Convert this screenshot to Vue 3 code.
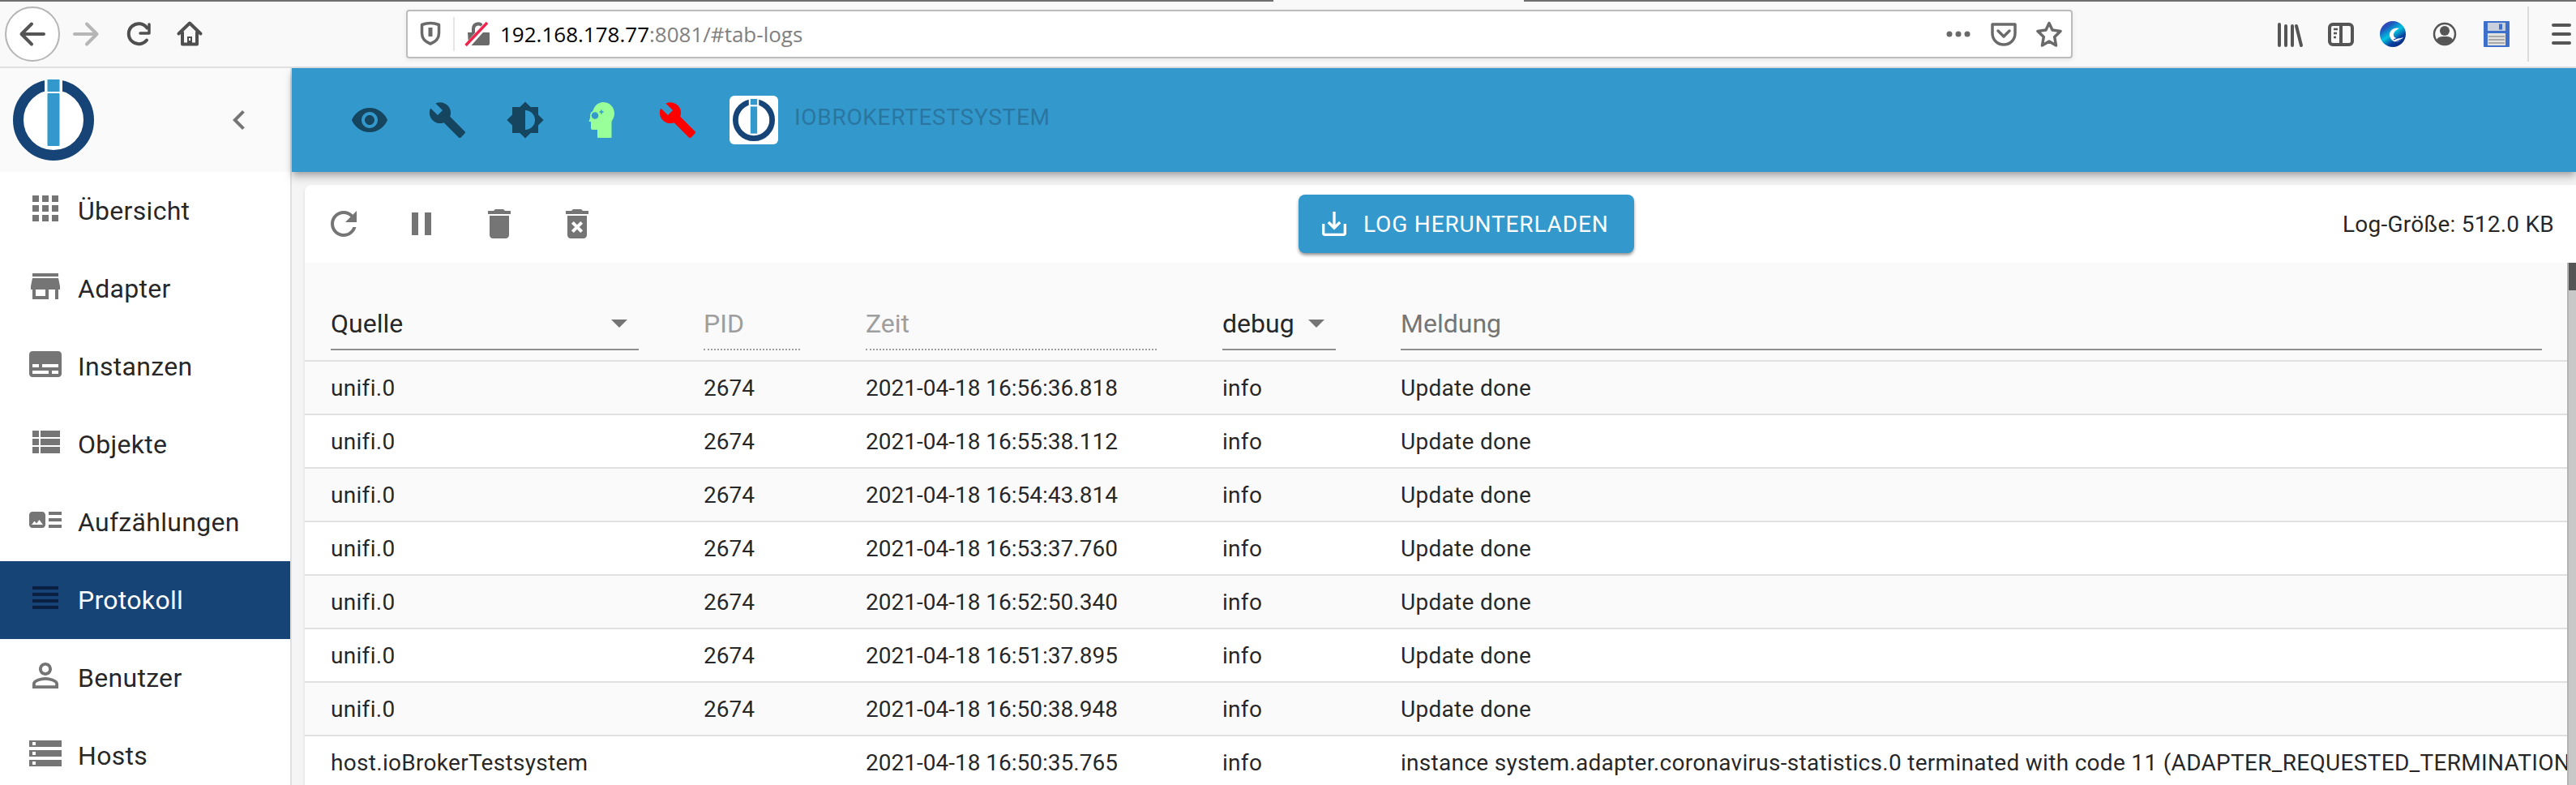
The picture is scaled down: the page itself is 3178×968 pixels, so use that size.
<script setup>
const navItems = [
  { label: 'Übersicht', d: 'M4 8h4V4H4v4zm6 12h4v-4h-4v4zm-6 0h4v-4H4v4zm0-6h4v-4H4v4zm6 0h4v-4h-4v4zm6-10v4h4V4h-4zm-6 4h4V4h-4v4zm6 6h4v-4h-4v4zm0 6h4v-4h-4v4z' },
  { label: 'Adapter', d: 'M20 4H4v2h16V4zm1 10v-2l-1-5H4l-1 5v2h1v6h10v-6h4v6h2v-6h1zm-9 4H6v-4h6v4z' },
  { label: 'Instanzen', d: 'M20 4H4c-1.1 0-2 .9-2 2v12c0 1.1.9 2 2 2h16c1.1 0 2-.9 2-2V6c0-1.1-.9-2-2-2zM4 12h4v2H4v-2zm10 6H4v-2h10v2zm6 0h-4v-2h4v2zm0-4H10v-2h10v2z' },
  { label: 'Objekte', d: 'M4 14h4v-4H4v4zm0 5h4v-4H4v4zM4 9h4V5H4v4zm5 5h12v-4H9v4zm0 5h12v-4H9v4zM9 5v4h12V5H9z' },
  { label: 'Aufzählungen', d: 'M22 13h-8v-2h8v2zm0-6h-8v2h8V7zm-8 10h8v-2h-8v2zm-2-8v6c0 1.1-.9 2-2 2H4c-1.1 0-2-.9-2-2V9c0-1.1.9-2 2-2h6c1.1 0 2 .9 2 2zm-1.5 6l-2.25-3-1.75 2.26-1.25-1.51L3.5 15h7z' },
  { label: 'Protokoll', active: true, d: 'M4 15h16v-2H4v2zm0 4h16v-2H4v2zm0-8h16V9H4v2zm0-6v2h16V5H4z' },
  { label: 'Benutzer', d: 'M12 5.9c1.16 0 2.1.94 2.1 2.1s-.94 2.1-2.1 2.1S9.9 9.16 9.9 8s.94-2.1 2.1-2.1m0 9c2.97 0 6.1 1.46 6.1 2.1v1.1H5.9V17c0-.64 3.13-2.1 6.1-2.1M12 4C9.79 4 8 5.79 8 8s1.79 4 4 4 4-1.79 4-4-1.79-4-4-4zm0 9c-2.67 0-8 1.34-8 4v3h16v-3c0-2.66-5.33-4-8-4z' },
  { label: 'Hosts', d: 'M2 20h20v-4H2v4zm2-3h2v2H4v-2zM2 4v4h20V4H2zm4 3H4V5h2v2zm-4 7h20v-4H2v4zm2-3h2v2H4v-2z' },
]
const wrench = 'M22.7 19l-9.1-9.1c.9-2.3.4-5-1.5-6.9-2-2-5-2.4-7.4-1.3L9 6 6 9 1.6 4.7C.4 7.1.9 10.1 2.9 12.1c1.9 1.9 4.6 2.4 6.9 1.5l9.1 9.1c.4.4 1 .4 1.4 0l2.3-2.3c.5-.4.5-1.1.1-1.4z'
const tools = [
  'M17.65 6.35C16.2 4.9 14.21 4 12 4c-4.42 0-7.99 3.58-7.99 8s3.57 8 7.99 8c3.73 0 6.84-2.55 7.73-6h-2.08c-.82 2.33-3.04 4-5.65 4-3.31 0-6-2.69-6-6s2.69-6 6-6c1.66 0 3.14.69 4.22 1.78L13 11h7V4l-2.35 2.35z',
  'M6 19h4V5H6v14zm8-14v14h4V5h-4z',
  'M6 19c0 1.1.9 2 2 2h8c1.1 0 2-.9 2-2V7H6v12zM19 4h-3.5l-1-1h-5l-1 1H5v2h14V4z',
  'M6 19c0 1.1.9 2 2 2h8c1.1 0 2-.9 2-2V7H6v12zm2.46-7.12l1.41-1.41L12 12.59l2.12-2.12 1.41 1.41L13.41 14l2.12 2.12-1.41 1.41L12 15.41l-2.12 2.12-1.41-1.41L10.59 14l-2.13-2.12zM15.5 4l-1-1h-5l-1 1H5v2h14V4z',
]
const times = ['16:56:36.818', '16:55:38.112', '16:54:43.814', '16:53:37.760', '16:52:50.340', '16:51:37.895', '16:50:38.948']
const rows = [
  ...times.map((t) => ({ src: 'unifi.0', pid: '2674', time: '2021-04-18 ' + t, level: 'info', msg: 'Update done' })),
  { src: 'host.ioBrokerTestsystem', pid: '', time: '2021-04-18 16:50:35.765', level: 'info', msg: 'instance system.adapter.coronavirus-statistics.0 terminated with code 11 (ADAPTER_REQUESTED_TERMINATION)' },
]
</script>

<template>
  <div class="page">
    <div class="browser">
      <div class="tabline"><span class="tl-a"></span><span class="tl-b"></span></div>
      <div class="nav-row">
        <div class="back">
          <svg class="ff" viewBox="0 0 32 32" fill="none" stroke="#555" stroke-width="4" stroke-linecap="round" stroke-linejoin="round"><path d="M30 16H3M15 3.5 2.5 16 15 28.5" /></svg>
        </div>
        <div class="nav-icons">
          <svg class="ff" viewBox="0 0 32 32" fill="none" stroke="#b6b6b6" stroke-width="4" stroke-linecap="round" stroke-linejoin="round"><path d="M2 16h27M17 3.5 29.5 16 17 28.5" /></svg>
          <svg class="ff" viewBox="0 0 32 32" fill="none" stroke="#4f4f4f" stroke-width="4" stroke-linecap="round" stroke-linejoin="round"><path d="M27 23.5A12.5 12.5 0 1 1 27.5 8.500" /><path d="M30 4V15H19" stroke-width="3.500" /></svg>
          <svg class="ff" viewBox="0 0 32 32" fill="none" stroke="#4f4f4f" stroke-width="4" stroke-linecap="round" stroke-linejoin="round"><path d="M2.500 15.500 16 2.500l13.500 13" /><path d="M7 14v14.500h18V14" /><path d="M13 28v-9h6v9h-6z" fill="#4f4f4f" stroke="none" /><rect x="15" y="21" width="2" height="3" fill="#fff" stroke="none" /></svg>
        </div>
        <div class="urlbar">
          <svg class="ff" viewBox="0 0 32 32" fill="none" stroke="#6a6a6a" stroke-width="3.500" stroke-linejoin="round"><path d="M4.500 4.500C11 2 19 2 25.500 4.500V15c0 6-4 10.500-10.500 13C8.500 25.500 4.500 21 4.500 15z" /><path d="M15 8v11" stroke-width="5" /></svg>
          <span class="url-sep"></span>
          <svg class="ff" viewBox="0 0 32 32"><path d="M11 15V9a6 6 0 0 1 10.500-3.500" fill="none" stroke="#6a6a6a" stroke-width="4" /><path d="M4 14h26a1 1 0 0 1 1 1v13a2 2 0 0 1-2 2H5z" fill="#6a6a6a" /><path d="M3 31 29 2" stroke="#fff" stroke-width="7" /><path d="M1.500 30 28 2" stroke="#f0254e" stroke-width="3.500" /></svg>
          <span class="url"><b>192.168.178.77</b>:8081/#tab-logs</span>
          <span class="url-right">
            <svg class="ff" viewBox="0 0 32 32" fill="#6a6a6a"><circle cx="5" cy="16" r="3.500" /><circle cx="16" cy="16" r="3.500" /><circle cx="27" cy="16" r="3.500" /></svg>
            <svg class="ff" viewBox="0 0 32 32" fill="none" stroke="#6a6a6a" stroke-width="3.500" stroke-linecap="round" stroke-linejoin="round"><path d="M2 4h28v11c0 8-6 14-14 14S2 23 2 15z" /><path d="M9 12l7 7 7-7" /></svg>
            <svg class="ff" viewBox="0 0 32 32" fill="none" stroke="#6a6a6a" stroke-width="3.500" stroke-linejoin="round"><path d="M16 2.500 20 11l10 1.500-7.300 7L24.500 30 16 25l-8.500 5 1.800-10.500L2 12.500 12 11z" /></svg>
          </span>
        </div>
        <div class="toolbar-right">
          <svg class="ff" viewBox="0 0 32 32" fill="none" stroke="#555" stroke-width="4" stroke-linecap="round"><path d="M4 4v26M12 6v24M20 6v24M25 6l6 24" /></svg>
          <svg class="ff" viewBox="0 0 32 32" fill="none" stroke="#555" stroke-width="4" stroke-linejoin="round"><rect x="2" y="4" width="28" height="25" rx="4" /><path d="M16 4v25" /><path d="M7 10h5M7 15h4M7 20h3" stroke-width="2.500" /></svg>
          <svg class="ff wave" viewBox="0 0 32 32">
            <defs>
              <linearGradient id="waveG" x1="0" y1="0" x2="0.700" y2="1">
                <stop offset="0" stop-color="#5a1fa6" />
                <stop offset="0.300" stop-color="#1c5ec0" />
                <stop offset="0.550" stop-color="#00c4e0" />
                <stop offset="0.800" stop-color="#0a3f9e" />
                <stop offset="1" stop-color="#0a2a80" />
              </linearGradient>
            </defs>
            <circle cx="16" cy="16" r="16" fill="url(#waveG)" />
            <path d="M24 9c-6-2-12 2-12 8 0 5 5 9 9 9 3-1 6-3 8-6-5 2-11 2-12-2-1-4 3-7 7-9z" fill="#fff" />
            <path d="M17 23l12-5M19 26l9-4" stroke="#0a3f9e" stroke-width="1.200" />
          </svg>
          <svg class="ff" viewBox="0 0 32 32" fill="#555"><circle cx="16" cy="16" r="13" fill="none" stroke="#555" stroke-width="2.500" /><circle cx="16" cy="12" r="6" /><path d="M6 23c2-4 6-4 10-4s8 0 10 4c-2 3-6 5-10 5s-8-2-10-5z" /></svg>
          <svg class="ff" viewBox="0 0 32 32"><rect width="32" height="32" rx="1" fill="#3e6fca" /><rect x="5" y="2" width="22" height="10" fill="#c9cfdc" /><rect x="19" y="3.500" width="4" height="7" fill="#3e6fca" /><rect x="5" y="15" width="22" height="15" fill="#e2e2e2" /><path d="M6 19h20M6 23h20M6 27h20" stroke="#a8a8a8" stroke-width="2" /></svg>
          <span class="tb-sep"></span>
          <svg class="ff burger" viewBox="0 0 24 32" fill="none" stroke="#555" stroke-width="4" stroke-linecap="round"><path d="M2 5h20M2 16h20M2 27h20" /></svg>
        </div>
      </div>
    </div>

    <div class="app">
      <aside class="sidebar">
        <div class="side-head">
          <svg class="logo-lg" viewBox="0 0 100 100">
            <circle cx="50" cy="50" r="43.500" fill="#fff" stroke="#164477" stroke-width="13" />
            <rect x="39" y="-1" width="22" height="18" fill="#fff" />
            <rect x="42.500" y="0" width="15" height="15" fill="#3399cc" />
            <rect x="42.500" y="17" width="15" height="65" rx="1" fill="#3399cc" />
          </svg>
          <svg class="chev" viewBox="0 0 24 24" fill="#757575"><path d="M15.410 7.410 14 6l-6 6 6 6 1.410-1.410L10.830 12z" /></svg>
        </div>
        <div v-for="item in navItems" :key="item.label" class="nav-item" :class="{ active: item.active }">
          <svg class="nav-ic" viewBox="0 0 24 24"><path :d="item.d" /></svg>
          <span>{{ item.label }}</span>
        </div>
      </aside>

      <main class="main">
        <header class="topbar">
          <svg class="tb-ic dark" viewBox="0 0 24 24"><path d="M12 4.500C7 4.500 2.730 7.610 1 12c1.730 4.390 6 7.500 11 7.500s9.270-3.110 11-7.500c-1.730-4.390-6-7.500-11-7.500zM12 17c-2.760 0-5-2.240-5-5s2.240-5 5-5 5 2.240 5 5-2.240 5-5 5zm0-8c-1.660 0-3 1.340-3 3s1.340 3 3 3 3-1.340 3-3-1.340-3-3-3z" /></svg>
          <svg class="tb-ic dark" viewBox="0 0 24 24"><path :d="wrench" /></svg>
          <svg class="tb-ic dark" viewBox="0 0 24 24"><path d="M20 15.310 23.310 12 20 8.690V4h-4.690L12 .69 8.690 4H4v4.690L.69 12 4 15.310V20h4.690L12 23.310 15.310 20H20v-4.690zM12 18V6c3.310 0 6 2.690 6 6s-2.690 6-6 6z" /></svg>
          <svg class="tb-ic" viewBox="0 0 48 48">
            <path d="M13 9C16 4 20 2 24 2c8 0 14 6 14 14 0 4-2 7-3.500 10v19a1 1 0 0 1-1 1H18a1 1 0 0 1-1-1v-9h-6a2 2 0 0 1-2-2v-8H6.500L9 18z" fill="#99ff99" />
            <circle cx="14" cy="18.500" r="6" fill="#99ff99" />
            <circle cx="14" cy="18.500" r="4.300" fill="#3399cc" />
            <path d="M22 11.500v5M19.500 14h5" stroke="#3399cc" stroke-width="1.500" />
          </svg>
          <svg class="tb-ic red" viewBox="0 0 24 24"><path :d="wrench" /></svg>
          <span class="logo-box">
            <svg viewBox="0 0 100 100">
              <circle cx="50" cy="50" r="43.500" fill="#fff" stroke="#164477" stroke-width="13" />
              <rect x="38" y="-1" width="24" height="18" fill="#fff" />
              <rect x="42" y="0" width="16" height="14" fill="#3399cc" />
              <rect x="42" y="18" width="16" height="64" fill="#3399cc" />
            </svg>
          </span>
          <span class="sys-name">ioBrokerTestsystem</span>
        </header>

        <section class="content">
          <div class="card">
            <div class="card-bar">
              <div class="tools">
                <span v-for="(d, i) in tools" :key="i" class="tool"><svg viewBox="0 0 24 24"><path :d="d" /></svg></span>
              </div>
              <button class="dl">
                <svg viewBox="0 0 24 24"><path d="M19 12v7H5v-7H3v7c0 1.100.9 2 2 2h14c1.100 0 2-.9 2-2v-7h-2zm-6 .670 2.590-2.580L17 11.500l-5 5-5-5 1.410-1.410L11 12.670V3h2z" /></svg>
                <span>Log herunterladen</span>
              </button>
              <span class="size">Log-Größe: 512.0 KB</span>
            </div>
            <div class="body">
              <div class="table">
                <div class="thead">
                  <div class="f sel f-src"><span>Quelle</span><i class="caret"></i></div>
                  <div class="f dis f-pid"><span>PID</span></div>
                  <div class="f dis f-time"><span>Zeit</span></div>
                  <div class="f sel f-lvl"><span>debug</span><i class="caret"></i></div>
                  <div class="f ph f-msg"><span>Meldung</span></div>
                </div>
                <div v-for="(r, i) in rows" :key="i" class="row" :class="{ odd: i % 2 === 0 }">
                  <span class="txt">{{ r.src }}</span>
                  <span>{{ r.pid }}</span>
                  <span>{{ r.time }}</span>
                  <span class="txt">{{ r.level }}</span>
                  <span class="msg txt">{{ r.msg }}</span>
                </div>
              </div>
              <div class="scrollbar"><div class="thumb"></div></div>
            </div>
          </div>
        </section>
      </main>
    </div>
  </div>
</template>

<style>
html, body {
  margin: 0;
  height: 100%;
  overflow: hidden;
  background: #fff;
}
</style>

<style scoped>
.page {
  width: 3178px;
  height: 968px;
  display: flex;
  flex-direction: column;
  overflow: hidden;
  font-family: Roboto, "Liberation Sans", sans-serif;
  color: rgba(0, 0, 0, 0.87);
}

/* browser chrome */
.browser {
  flex: none;
  height: 84px;
  box-sizing: border-box;
  background: #f9f9fa;
  border-bottom: 2px solid #e0e0e0;
  display: flex;
  flex-direction: column;
}
.tabline {
  flex: none;
  height: 2px;
  display: flex;
  justify-content: space-between;
}
.tl-a { width: 1571px; background: #6f6f6f; }
.tl-b { width: 1298px; background: #6f6f6f; }
.nav-row {
  flex: 1;
  display: flex;
  align-items: center;
  padding-left: 6px;
}
.ff {
  flex: none;
  width: 32px;
  height: 32px;
  overflow: visible;
}
.back {
  flex: none;
  width: 68px;
  height: 68px;
  box-sizing: border-box;
  border: 2px solid #b5b5b6;
  border-radius: 50%;
  background: #fff;
  display: flex;
  align-items: center;
  justify-content: center;
}
.nav-icons {
  flex: none;
  margin-left: 16px;
  display: flex;
  gap: 32px;
}
.urlbar {
  flex: none;
  margin-left: 251px;
  width: 2056px;
  height: 60px;
  box-sizing: border-box;
  border: 2px solid #bcbcbc;
  border-radius: 4px;
  background: #fff;
  box-shadow: 0 2px 6px rgba(0, 0, 0, 0.08);
  display: flex;
  align-items: center;
  padding-left: 13px;
}
.url-sep {
  flex: none;
  width: 2px;
  height: 42px;
  margin: 0 12px 0 11px;
  background: #e6e6e6;
}
.url {
  margin-left: 12px;
  font-family: "Open Sans", sans-serif;
  font-size: 26px;
  color: #808080;
  white-space: nowrap;
}
.url b {
  font-weight: 400;
  color: #000;
}
.url-right {
  margin-left: auto;
  padding-right: 11px;
  display: flex;
  gap: 24px;
}
.toolbar-right {
  flex: none;
  margin-left: 251px;
  display: flex;
  align-items: center;
  gap: 32px;
}
.tb-sep {
  flex: none;
  width: 2px;
  height: 68px;
  background: #dcdcdc;
  margin: 0 -4px 0 -10px;
}
.burger {
  width: 24px;
}

/* app */
.app {
  flex: 1;
  min-height: 0;
  display: flex;
}
.sidebar {
  flex: none;
  width: 360px;
  box-sizing: border-box;
  border-right: 2px solid #e0e0e0;
  background: #fff;
  overflow: hidden;
}
.side-head {
  height: 128px;
  background: #fafafa;
  display: flex;
  align-items: center;
  padding-left: 16px;
}
.logo-lg {
  flex: none;
  width: 100px;
  height: 100px;
}
.chev {
  flex: none;
  width: 48px;
  height: 48px;
  margin-left: 155px;
}
.nav-item {
  height: 96px;
  display: flex;
  align-items: center;
  padding-left: 32px;
  font-size: 32px;
  letter-spacing: 0.300px;
}
.nav-ic {
  flex: none;
  width: 48px;
  height: 48px;
  margin: 0 16px 6px 0;
  fill: #757575;
}
.nav-item.active {
  background: #164477;
  color: #fff;
}
.nav-item.active .nav-ic {
  fill: #0b1f42;
}

.main {
  flex: 1;
  min-width: 0;
  display: flex;
  flex-direction: column;
  background: #f5f5f5;
}
.topbar {
  flex: none;
  position: relative;
  z-index: 2;
  height: 128px;
  background: #3399cc;
  box-shadow: 0 4px 8px -2px rgba(0, 0, 0, 0.3), 0 8px 10px 1px rgba(0, 0, 0, 0.12);
  display: flex;
  align-items: center;
  padding-left: 72px;
}
.tb-ic {
  flex: none;
  width: 48px;
  height: 48px;
  margin-right: 48px;
}
.tb-ic.dark { fill: #164560; }
.tb-ic.red {
  fill: #ff0000;
  margin-left: -4px;
  margin-right: 40px;
}
.logo-box {
  flex: none;
  width: 60px;
  height: 60px;
  box-sizing: border-box;
  padding: 4px;
  border-radius: 6px;
  background: #fff;
  display: flex;
}
.logo-box svg {
  width: 52px;
  height: 52px;
}
.sys-name {
  margin: -8px 0 0 20px;
  font-size: 28px;
  letter-spacing: 0.700px;
  text-transform: uppercase;
  color: #2a76a1;
}

.content {
  flex: 1;
  min-height: 0;
  padding: 16px 0 0 16px;
}
.card {
  height: 100%;
  display: flex;
  flex-direction: column;
  background: #fff;
  border-radius: 8px 0 0 0;
  box-shadow: 0 2px 4px rgba(0, 0, 0, 0.12);
  overflow: hidden;
}
.card-bar {
  flex: none;
  height: 96px;
  display: flex;
  align-items: center;
}
.tools {
  display: flex;
}
.tool {
  width: 96px;
  height: 96px;
  display: flex;
  align-items: center;
  justify-content: center;
}
.tool svg {
  width: 48px;
  height: 48px;
  fill: #757575;
}
.dl {
  margin-left: 842px;
  width: 414px;
  height: 72px;
  box-sizing: border-box;
  padding: 0 0 0 24px;
  border: 0;
  border-radius: 8px;
  background: #3399cc;
  color: #fff;
  box-shadow: 0 3px 4px -1px rgba(0, 0, 0, 0.4), 0 2px 4px rgba(0, 0, 0, 0.14);
  display: flex;
  align-items: center;
  font-family: Roboto, sans-serif;
  font-size: 28px;
  font-weight: 400;
  letter-spacing: 0.850px;
  text-transform: uppercase;
}
.dl svg {
  flex: none;
  width: 40px;
  height: 40px;
  fill: #fff;
  margin-right: 16px;
}
.size {
  margin-left: auto;
  padding-right: 27px;
  font-size: 28px;
  letter-spacing: 0.250px;
}
.body {
  flex: 1;
  min-height: 0;
  display: flex;
  background: #fff;
}
.table {
  flex: 1;
  min-width: 0;
  overflow: hidden;
}
.scrollbar {
  flex: none;
  width: 11px;
  box-sizing: border-box;
  background: #c8c8c8;
  border-left: 2px solid #b4b4b4;
}
.thumb {
  height: 34px;
  background: #555;
}
.thead {
  height: 122px;
  box-sizing: border-box;
  border-bottom: 2px solid #e0e0e0;
  background: #fafafa;
  padding-left: 32px;
  display: flex;
  align-items: flex-end;
}
.f {
  flex: none;
  box-sizing: border-box;
  height: 54px;
  margin-bottom: 12px;
  padding-bottom: 10px;
  display: flex;
  align-items: center;
  font-size: 32px;
  border-bottom: 2px solid #8f8f8f;
}
.f-src { width: 380px; margin-right: 80px; }
.f-pid { width: 119px; margin-right: 81px; }
.f-time { width: 359px; margin-right: 81px; }
.f-lvl { width: 140px; margin-right: 80px; }
.f-msg { width: 1408px; }
.dis {
  color: #9e9e9e;
  border-bottom: 2px dotted #9e9e9e;
}
.ph {
  color: #757575;
}
.caret {
  margin-left: auto;
  margin-right: 14px;
  width: 0;
  height: 0;
  border-left: 10px solid transparent;
  border-right: 10px solid transparent;
  border-top: 10px solid #757575;
}
.row {
  box-sizing: border-box;
  height: 66px;
  padding-left: 32px;
  border-bottom: 2px solid #e0e0e0;
  display: grid;
  grid-template-columns: 460px 200px 440px 220px minmax(0, 1fr);
  align-items: center;
  font-size: 28px;
  background: #fff;
  white-space: nowrap;
}
.row.odd {
  background: #fafafa;
}
.txt {
  letter-spacing: 0.300px;
}
.msg {
  overflow: hidden;
}
</style>
